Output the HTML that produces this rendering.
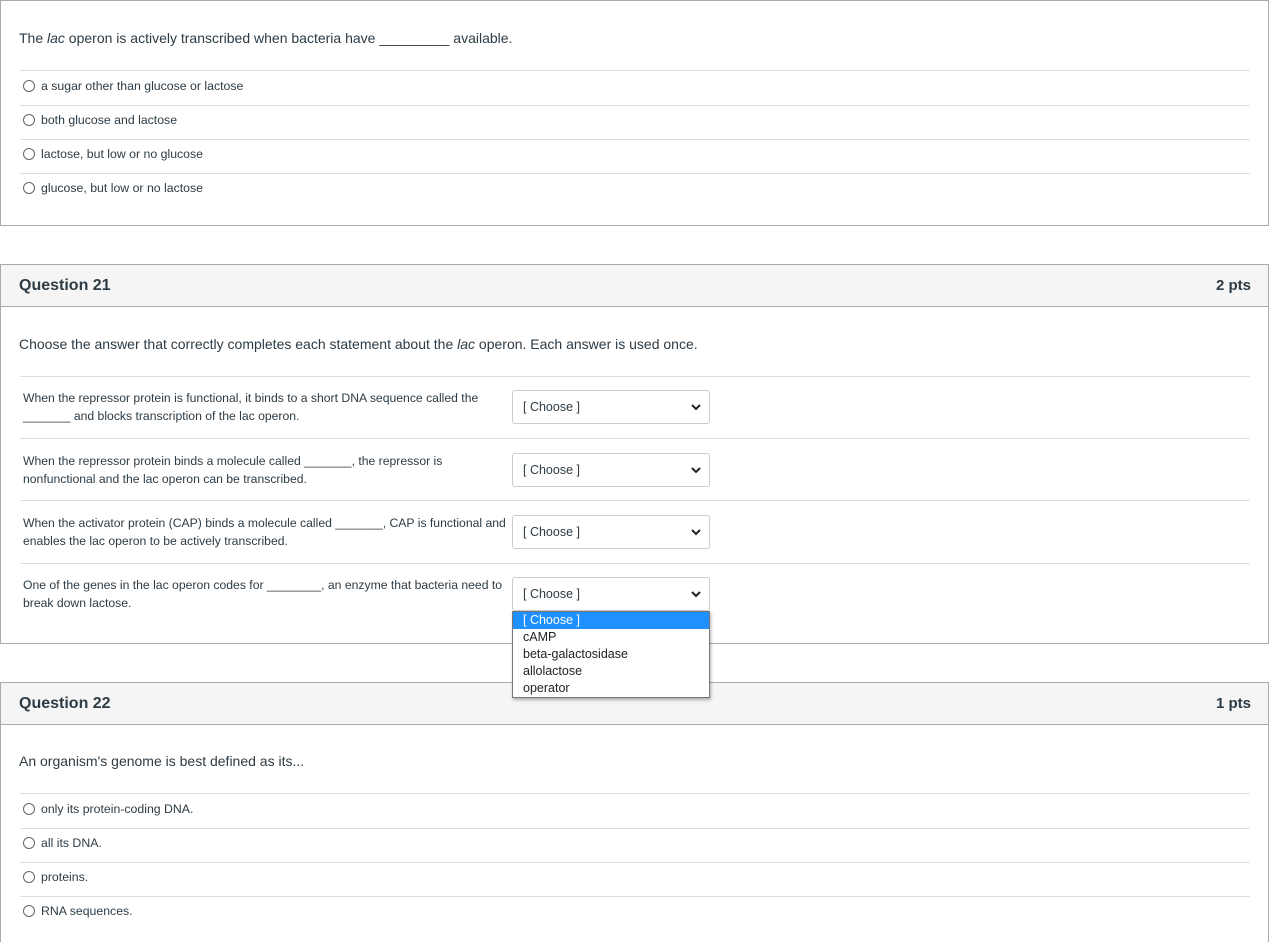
<!DOCTYPE html>
<html><head><style>
html,body{margin:0;width:1269px;height:942px;overflow:hidden}
body{background:#fff;font-family:"Liberation Sans",sans-serif;color:#2d3b45;position:relative}
.a{position:absolute}
.box{position:absolute;left:0;width:1267px;border:1px solid #aaa;background:#fff}
.hdr{position:absolute;left:0;width:1267px;background:#f5f5f5;border:1px solid #aaa;height:41px}
.hdr b{position:absolute;left:18px;top:12px;font-size:16px}
.hdr span{position:absolute;right:17px;top:12px;font-size:15px;font-weight:bold}
.ln{position:absolute;left:20px;width:1230px;height:1px;background:#ddd}
.q{position:absolute;left:19px;font-size:14px}
.opt{position:absolute;left:23px;font-size:12.3px}
.opt i{display:inline-block;width:10px;height:10px;border:1px solid #666;border-radius:50%;vertical-align:-2px;margin-right:6px;font-style:normal}
.mt{position:absolute;left:23px;font-size:12.2px;line-height:18px;white-space:nowrap}
.sel{position:absolute;left:512px;width:196px;height:32px;border:1px solid #ccc;border-radius:3px;background:#fff;font-size:12.5px}
.sel span{position:absolute;left:10px;top:9px}
.sel svg{position:absolute;right:8px;top:12px}
</style></head><body>
<div class="box" style="top:0;height:224px"></div>
<div class="q" style="top:30px">The <i>lac</i> operon is actively transcribed when bacteria have _________ available.</div>
<div class="ln" style="top:70px"></div><div class="ln" style="top:105px"></div><div class="ln" style="top:139px"></div><div class="ln" style="top:173px"></div>
<div class="opt" style="top:79px"><i></i>a sugar other than glucose or lactose</div>
<div class="opt" style="top:113px"><i></i>both glucose and lactose</div>
<div class="opt" style="top:147px"><i></i>lactose, but low or no glucose</div>
<div class="opt" style="top:181px"><i></i>glucose, but low or no lactose</div>

<div class="box" style="top:264px;height:378px"></div>
<div class="hdr" style="top:264px"><b>Question 21</b><span>2 pts</span></div>
<div class="q" style="top:336px">Choose the answer that correctly completes each statement about the <i>lac</i> operon. Each answer is used once.</div>
<div class="ln" style="top:376px"></div><div class="ln" style="top:438px"></div><div class="ln" style="top:500px"></div><div class="ln" style="top:563px"></div>
<div class="mt" style="top:389px">When the repressor protein is functional, it binds to a short DNA sequence called the<br>_______ and blocks transcription of the lac operon.</div>
<div class="mt" style="top:452px">When the repressor protein binds a molecule called _______, the repressor is<br>nonfunctional and the lac operon can be transcribed.</div>
<div class="mt" style="top:514px">When the activator protein (CAP) binds a molecule called _______, CAP is functional and<br>enables the lac operon to be actively transcribed.</div>
<div class="mt" style="top:576px">One of the genes in the lac operon codes for ________, an enzyme that bacteria need to<br>break down lactose.</div>
<div class="sel" style="top:390px"><span>[ Choose ]</span><svg width="10" height="8"><path d="M1 2l4 4 4-4" stroke="#222" stroke-width="2" fill="none"/></svg></div>
<div class="sel" style="top:453px"><span>[ Choose ]</span><svg width="10" height="8"><path d="M1 2l4 4 4-4" stroke="#222" stroke-width="2" fill="none"/></svg></div>
<div class="sel" style="top:515px"><span>[ Choose ]</span><svg width="10" height="8"><path d="M1 2l4 4 4-4" stroke="#222" stroke-width="2" fill="none"/></svg></div>
<div class="sel" style="top:577px"><span>[ Choose ]</span><svg width="10" height="8"><path d="M1 2l4 4 4-4" stroke="#222" stroke-width="2" fill="none"/></svg></div>

<div class="box" style="top:682px;height:264px"></div>
<div class="hdr" style="top:682px"><b>Question 22</b><span>1 pts</span></div>
<div class="q" style="top:753px">An organism's genome is best defined as its...</div>
<div class="ln" style="top:793px"></div><div class="ln" style="top:828px"></div><div class="ln" style="top:862px"></div><div class="ln" style="top:896px"></div>
<div class="opt" style="top:802px"><i></i>only its protein-coding DNA.</div>
<div class="opt" style="top:836px"><i></i>all its DNA.</div>
<div class="opt" style="top:870px"><i></i>proteins.</div>
<div class="opt" style="top:904px"><i></i>RNA sequences.</div>

<div class="a" style="left:512px;top:611px;width:196px;height:85px;border:1px solid #777;background:#fff;font-size:12.5px;line-height:17px;box-shadow:1px 2px 3px rgba(0,0,0,.3)">
<div style="background:#1e90ff;color:#fff;padding-left:10px">[ Choose ]</div>
<div style="padding-left:10px;color:#222">cAMP</div>
<div style="padding-left:10px;color:#222">beta-galactosidase</div>
<div style="padding-left:10px;color:#222">allolactose</div>
<div style="padding-left:10px;color:#222">operator</div>
</div>
</body></html>
